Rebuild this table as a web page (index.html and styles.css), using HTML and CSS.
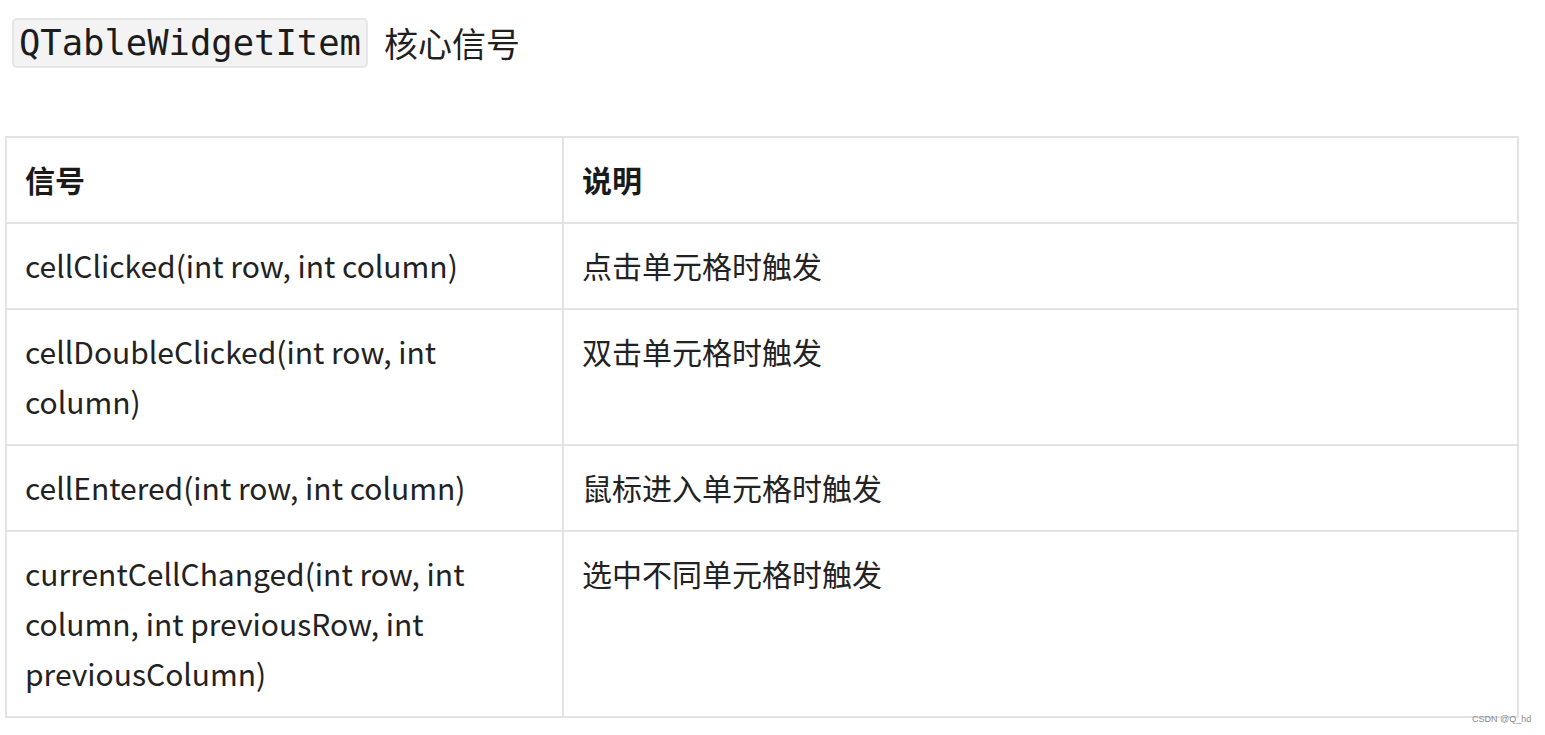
FILE: index.html
```html
<!DOCTYPE html>
<html lang="zh">
<head>
<meta charset="utf-8">
<link rel="stylesheet" href="styles.css">
</head>
<body>
<div class="page">
  <h3 class="title"><code class="code">QTableWidgetItem</code> 核心信号</h3>
  <table class="signals">
    <colgroup><col class="c1"><col class="c2"></colgroup>
    <thead>
      <tr><th>信号</th><th>说明</th></tr>
    </thead>
    <tbody>
      <tr><td>cellClicked(int row, int column)</td><td>点击单元格时触发</td></tr>
      <tr><td>cellDoubleClicked(int row, int column)</td><td>双击单元格时触发</td></tr>
      <tr><td>cellEntered(int row, int column)</td><td>鼠标进入单元格时触发</td></tr>
      <tr><td>currentCellChanged(int row, int column, int previousRow, int previousColumn)</td><td>选中不同单元格时触发</td></tr>
    </tbody>
  </table>
  <div class="mark">CSDN @Q_hd</div>
</div>
</body>
</html>
```
FILE: styles.css
```css
html, body {
  margin: 0;
  padding: 0;
  background: #ffffff;
}
.page {
  width: 1545px;
  height: 735px;
  overflow: hidden;
  padding: 18px 0 0 5px;
  box-sizing: border-box;
  font-family: "Noto Sans CJK SC", sans-serif;
  color: #222;
}
.title {
  margin: 0 0 68px 7px;
  font-weight: 400;
  font-size: 34px;
  line-height: 50px;
  display: flex;
  align-items: center;
  gap: 16px;
  color: #1f1f1f;
}
.code {
  font-family: "DejaVu Sans Mono", monospace;
  font-size: 35.5px;
  line-height: 46px;
  padding: 0 5px;
  background: #f3f3f3;
  border: 2px solid #e6e6e6;
  border-radius: 5px;
  color: #1c1c1c;
}
.signals {
  border-collapse: collapse;
  width: 1514px;
  table-layout: fixed;
  font-size: 30px;
  line-height: 50px;
}
.c1 { width: 557px; }
.signals th, .signals td {
  border: 2px solid #e3e3e3;
  padding: 16px 18px 18px 18px;
  text-align: left;
  vertical-align: top;
}
.signals th {
  font-weight: 700;
  color: #1a1a1a;
}
.signals td {
  color: #222;
}
.mark {
  position: absolute;
  left: 1472px;
  top: 714px;
  font-family: "Liberation Sans", sans-serif;
  font-size: 9px;
  color: #8a8a8a;
}
```
